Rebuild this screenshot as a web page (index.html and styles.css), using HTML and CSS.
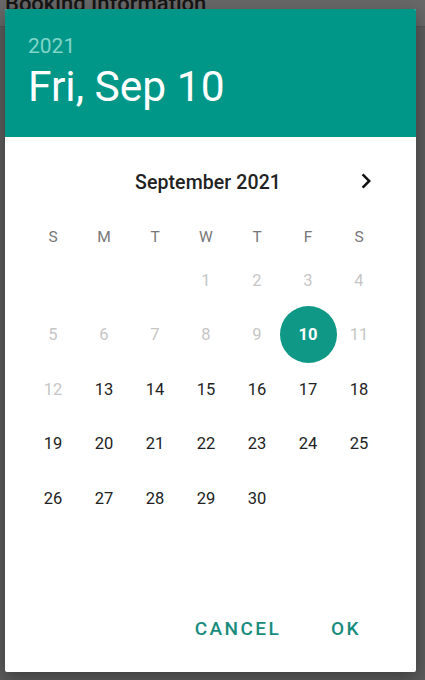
FILE: index.html
```html
<!DOCTYPE html>
<html lang="en">
<head>
  <meta charset="UTF-8">
  <meta name="viewport" content="width=device-width, initial-scale=1.0">
  <title>Booking Information</title>
  <link rel="stylesheet" href="styles.css">
</head>
<body>
  <!-- Page behind the dialog, dimmed by the scrim -->
  <div class="page">
    <div class="page-header">
      <h1>Booking Information</h1>
    </div>
  </div>

  <div class="dialog">
    <div class="dialog-header">
      <div class="header-year">2021</div>
      <div class="header-date">Fri, Sep 10</div>
    </div>

    <div class="month-row">
      <span class="month-title">September 2021</span>
      <button type="button" class="month-next" aria-label="Next month">
        <svg width="30" height="30" viewBox="0 0 24 24">
          <path d="M10 6 8.59 7.41 13.17 12l-4.58 4.59L10 18l6-6z" fill="#111"/>
        </svg>
      </button>
    </div>

    <div class="week-row">
      <span>S</span><span>M</span><span>T</span><span>W</span><span>T</span><span>F</span><span>S</span>
    </div>

    <div class="days">
      <span></span><span></span><span></span>
      <span class="off">1</span><span class="off">2</span><span class="off">3</span><span class="off">4</span>
      <span class="off">5</span><span class="off">6</span><span class="off">7</span><span class="off">8</span><span class="off">9</span>
      <span class="selected"><b>10</b></span>
      <span class="off">11</span>
      <span class="off">12</span><span>13</span><span>14</span><span>15</span><span>16</span><span>17</span><span>18</span>
      <span>19</span><span>20</span><span>21</span><span>22</span><span>23</span><span>24</span><span>25</span>
      <span>26</span><span>27</span><span>28</span><span>29</span><span>30</span>
    </div>

    <div class="actions">
      <button type="button" class="text-btn">CANCEL</button>
      <button type="button" class="text-btn">OK</button>
    </div>
  </div>
</body>
</html>
```

FILE: styles.css
```css
body {
  font-family: Roboto, 'Noto Sans', sans-serif;
  margin: 0;
  padding: 0;
  background-color: #5c5c5c;
  height: 680px;
  overflow: hidden;
}

/* Dimmed page */
.page-header {
  background-color: #686868;
  height: 33px;
  border-bottom: 1px solid #555;
}

.page-header h1 {
  margin: -7px 0 0 5px;
  font-size: 22px;
  line-height: 22px;
  font-weight: 500;
  color: #151515;
}

/* Date picker dialog */
.dialog {
  position: absolute;
  left: 5px;
  top: 9px;
  width: 411px;
  height: 663px;
  background-color: #fff;
  border-radius: 2px;
  box-shadow: 0 6px 18px rgba(0, 0, 0, 0.35);
  overflow: hidden;
  display: flex;
  flex-direction: column;
}

.dialog-header {
  background-color: #009688;
  height: 128px;
  box-sizing: border-box;
  padding: 25px 0 0 23px;
}

.header-year {
  color: #7fd5c8;
  font-size: 21px;
  line-height: 24px;
}

.header-date {
  color: #fff;
  font-size: 42.5px;
  line-height: 50px;
  margin-top: 4px;
}

.month-row {
  position: relative;
  height: 48px;
  margin-top: 21px;
  display: flex;
  align-items: center;
  justify-content: center;
  padding-right: 5px;
}

.month-title {
  font-size: 19.5px;
  font-weight: 500;
  color: #222;
  letter-spacing: 0.1px;
}

.month-next {
  position: absolute;
  right: 35px;
  top: 8px;
  border: none;
  background: none;
  padding: 0;
  width: 30px;
  height: 30px;
  cursor: pointer;
}

.week-row,
.days {
  display: grid;
  grid-template-columns: repeat(7, 51px);
  padding-left: 22.5px;
}

.week-row {
  margin-top: 15px;
  height: 32px;
  align-items: center;
}

.week-row span {
  text-align: center;
  font-size: 15.5px;
  color: #777;
}

.days {
  grid-auto-rows: 54.5px;
}

.days span {
  display: flex;
  align-items: center;
  justify-content: center;
  font-size: 16.5px;
  color: #222;
}

.days .off {
  color: #c6c6c6;
}

.days .selected b {
  width: 57px;
  height: 57px;
  border-radius: 50%;
  background-color: #0f9886;
  color: #fff;
  font-weight: 700;
  display: flex;
  align-items: center;
  justify-content: center;
  flex-shrink: 0;
}

.actions {
  margin-top: auto;
  display: flex;
  justify-content: flex-end;
  gap: 20px;
  padding: 0 41px 20px 0;
}

.text-btn {
  font-family: Roboto, sans-serif;
  font-size: 19px;
  font-weight: 500;
  letter-spacing: 2.4px;
  color: #178c7e;
  background: none;
  border: none;
  height: 48px;
  padding: 0 14px 0 16px;
  cursor: pointer;
}
```
